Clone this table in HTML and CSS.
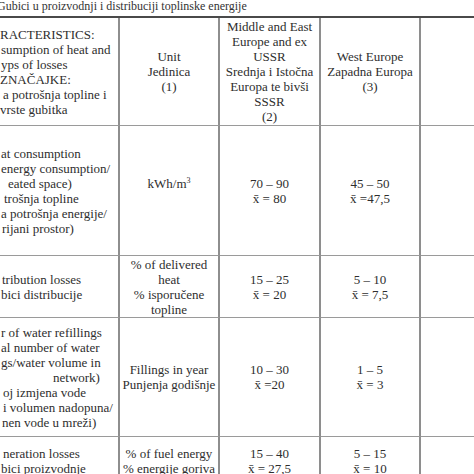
FILE: index.html
```html
<!DOCTYPE html>
<html>
<head>
<meta charset="utf-8">
<link rel="stylesheet" href="styles.css">
</head>
<body>
<div class="page">
  <div class="title">Gubici u proizvodnji i distribuciji toplinske energije</div>
  <div class="grid">
    <div class="cell left">
      <span class="ln">RACTERISTICS:</span>
      <span class="ln i1">sumption of heat and</span>
      <span class="ln i1">yps of losses</span>
      <span class="ln">ZNAČAJKE:</span>
      <span class="ln i3">a potrošnja topline i</span>
      <span class="ln">vrste gubitka</span>
    </div>
    <div class="cell"><span>Unit</span><span>Jedinica</span><span>(1)</span></div>
    <div class="cell"><span>Middle and East</span><span>Europe and ex</span><span>USSR</span><span>Srednja i Istočna</span><span>Europa te bivši</span><span>SSSR</span><span>(2)</span></div>
    <div class="cell"><span>West Europe</span><span>Zapadna Europa</span><span>(3)</span></div>
    <div class="cell last"></div>

    <div class="cell left">
      <span class="ln i1">at consumption</span>
      <span class="ln i1">energy consumption/</span>
      <span class="ln i8">eated space)</span>
      <span class="ln i4">trošnja topline</span>
      <span class="ln i1">a potrošnja energije/</span>
      <span class="ln i2">rijani prostor)</span>
    </div>
    <div class="cell up"><span>kWh/m<sup>3</sup></span></div>
    <div class="cell"><span>70 – 90</span><span>x̄ = 80</span></div>
    <div class="cell"><span>45 – 50</span><span>x̄ =47,5</span></div>
    <div class="cell last"></div>

    <div class="cell left">
      <span class="ln i2">tribution losses</span>
      <span class="ln i1">bici distribucije</span>
    </div>
    <div class="cell"><span>% of delivered</span><span>heat</span><span>% isporučene</span><span>topline</span></div>
    <div class="cell"><span>15 – 25</span><span>x̄ = 20</span></div>
    <div class="cell"><span>5 – 10</span><span>x̄ = 7,5</span></div>
    <div class="cell last"></div>

    <div class="cell left">
      <span class="ln i1">r of water refillings</span>
      <span class="ln i1">al number of water</span>
      <span class="ln i1">gs/water volume in</span>
      <span class="ln i53">network)</span>
      <span class="ln i3">oj izmjena vode</span>
      <span class="ln i3">i volumen nadopuna/</span>
      <span class="ln i2">nen vode u mreži)</span>
    </div>
    <div class="cell"><span>Fillings in year</span><span>Punjenja godišnje</span></div>
    <div class="cell"><span>10 – 30</span><span>x̄ =20</span></div>
    <div class="cell"><span>1 – 5</span><span>x̄ = 3</span></div>
    <div class="cell last"></div>

    <div class="cell left">
      <span class="ln i3">neration losses</span>
      <span class="ln i1">bici proizvodnje</span>
    </div>
    <div class="cell"><span>% of fuel energy</span><span>% energije goriva</span></div>
    <div class="cell"><span>15 – 40</span><span>x̄ = 27,5</span></div>
    <div class="cell"><span>5 – 15</span><span>x̄ = 10</span></div>
    <div class="cell last"></div>
  </div>
</div>
</body>
</html>
```
FILE: styles.css
```css
html, body {
  margin: 0;
  padding: 0;
  background: #ffffff;
}
.page {
  width: 474px;
  height: 474px;
  overflow: hidden;
  font-family: "Liberation Serif", "Times New Roman", serif;
  color: #2e2e2e;
}
.title {
  margin-left: -3px;
  font-size: 12px;
  line-height: 13px;
  white-space: nowrap;
  color: #333;
  box-sizing: border-box;
  height: 16px;
  padding-top: 0;
}
.grid {
  display: grid;
  grid-template-columns: 120px 100px 101px 100px 80px;
  grid-template-rows: 108px 130px 62px 119px 48px;
  border-top: 2px solid #4a4a4a;
  width: 501px;
}
.cell {
  display: flex;
  flex-direction: column;
  align-items: center;
  justify-content: center;
  text-align: center;
  font-size: 13px;
  line-height: 15px;
  border-right: 2px solid #8e8e8e;
  border-bottom: 1.5px solid #9a9a9a;
  box-sizing: border-box;
  white-space: nowrap;
}
.cell.last {
  border-right: none;
}
.cell.left {
  align-items: flex-start;
  text-align: left;
}
.cell.up {
  padding-bottom: 14px;
}
.ln {
  display: block;
}
.i1 { padding-left: 1px; }
.i2 { padding-left: 2px; }
.i3 { padding-left: 3px; }
.i4 { padding-left: 4px; }
.i8 { padding-left: 8px; }
.i53 { padding-left: 53px; }
sup {
  font-size: 8px;
  line-height: 0;
}
```
